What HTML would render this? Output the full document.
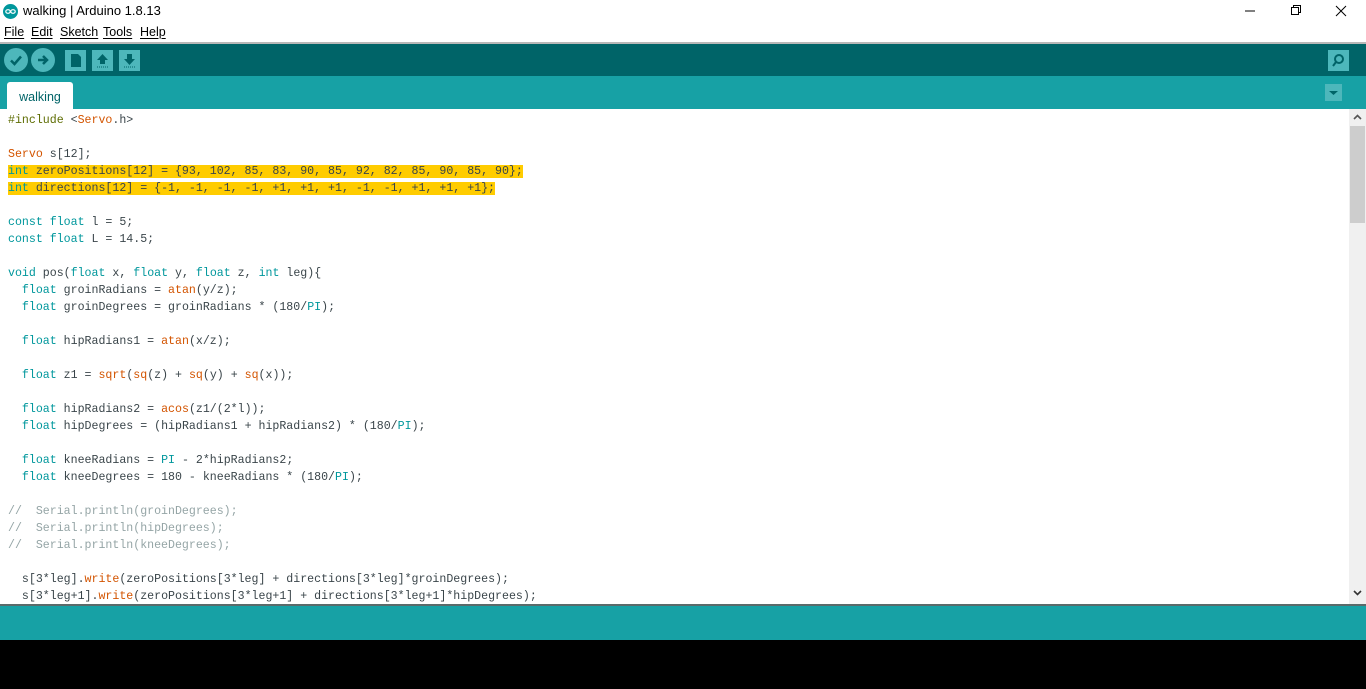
<!DOCTYPE html>
<html><head><meta charset="utf-8"><style>
*{margin:0;padding:0;box-sizing:border-box}
body{width:1366px;height:689px;overflow:hidden;background:#000;font-family:"Liberation Sans",sans-serif;position:relative}
.title{position:absolute;left:0;top:0;width:1366px;height:23px;background:#fff}
.title .t{position:absolute;left:23px;top:3px;font-size:13px;color:#000}
.menu{position:absolute;left:0;top:23px;width:1366px;height:20px;background:#fff;font-size:12.5px;color:#000}
.menu span{position:absolute;top:2px;text-decoration:underline;text-decoration-thickness:1px;text-underline-offset:2px}
.sep{position:absolute;left:0;top:42px;width:1366px;height:2px;background:#b8b8b8}
.tool{position:absolute;left:0;top:44px;width:1366px;height:32px;background:#006468}
.tabs{position:absolute;left:0;top:76px;width:1366px;height:33px;background:#17a1a5}
.tab{position:absolute;left:7px;top:6px;width:66px;height:27px;background:#fff;border-radius:3px 3px 0 0;color:#006468;font-size:12.5px;text-align:center;line-height:31px}
.ed{position:absolute;left:0;top:109px;width:1349px;height:495px;background:#fff;overflow:hidden}
pre{position:absolute;left:8px;top:3px;font-family:"Liberation Mono",monospace;font-size:11.6px;line-height:17px;color:#3a454a}
.k{color:#00979c}.f{color:#d35400}.c{color:#95a5a6}
.hl{background:#ffcc00}
.sb{position:absolute;left:1349px;top:109px;width:17px;height:495px;background:#f0f0f0}
.th{position:absolute;left:1px;top:17px;width:15px;height:97px;background:#cdcdcd}
.bot{position:absolute;left:0;top:604px;width:1366px;height:36px;background:#17a1a5;border-top:2px solid #5a6a6a}
</style></head><body>
<div class="title">
<svg style="position:absolute;left:3px;top:4px" width="15" height="15"><circle cx="7.5" cy="7.5" r="7.5" fill="#00979c"/><ellipse cx="5" cy="7.5" rx="2.2" ry="1.8" fill="none" stroke="#fff" stroke-width="1.2"/><ellipse cx="10" cy="7.5" rx="2.2" ry="1.8" fill="none" stroke="#fff" stroke-width="1.2"/></svg>
<span class="t">walking | Arduino 1.8.13</span>
<svg style="position:absolute;left:1245px;top:5px" width="110" height="12"><line x1="0" y1="6" x2="10" y2="6" stroke="#000"/><rect x="46.5" y="2.5" width="7" height="7" fill="none" stroke="#000"/><path d="M48.5 2.5V0.5H55.5V7.5H53.5" fill="none" stroke="#000"/><path d="M91 1L101 11M101 1L91 11" stroke="#000"/></svg>
</div>
<div class="menu"><span style="left:4px">File</span><span style="left:31px">Edit</span><span style="left:60px">Sketch</span><span style="left:103px">Tools</span><span style="left:140px">Help</span></div>
<div class="sep"></div>
<div class="tool">
<svg style="position:absolute;left:4px;top:4px" width="140" height="24">
<circle cx="12" cy="12" r="12" fill="#4db7bb"/><path d="M7 12.5L10.5 16L17 8.5" stroke="#006468" stroke-width="2.5" fill="none"/>
<circle cx="39" cy="12" r="12" fill="#4db7bb"/><path d="M34 12H42M39 8L43 12L39 16" stroke="#006468" stroke-width="2.5" fill="none"/>
<rect x="61" y="2" width="21" height="21" fill="#4db7bb"/><path d="M67 6H74L77 9V19H67Z" fill="#006468"/>
<rect x="88" y="2" width="21" height="21" fill="#4db7bb"/><path d="M98.5 6L104 12H101V16H96V12H93Z" fill="#006468"/><path d="M93 19H104" stroke="#006468" stroke-dasharray="1 1"/>
<rect x="115" y="2" width="21" height="21" fill="#4db7bb"/><path d="M125.5 17L131 11H128V6H123V11H120Z" fill="#006468"/><path d="M120 19H131" stroke="#006468" stroke-dasharray="1 1"/>
</svg>
<svg style="position:absolute;left:1328px;top:6px" width="21" height="21"><rect width="21" height="21" fill="#4db7bb"/><circle cx="11" cy="9" r="4" fill="none" stroke="#006468" stroke-width="2"/><path d="M8 12L5 16" stroke="#006468" stroke-width="2"/></svg>
</div>
<div class="tabs"><div class="tab">walking</div>
<svg style="position:absolute;left:1325px;top:8px" width="17" height="17"><rect width="17" height="17" fill="#4db7bb"/><path d="M4 7H13L8.5 11Z" fill="#006468"/></svg></div>
<div class="ed"><pre><span style="color:#5e6d03">#include</span> &lt;<span class="f">Servo</span>.h&gt;

<span class="f">Servo</span> s[12];
<span class="hl"><span class="k">int</span> zeroPositions[12] = {93, 102, 85, 83, 90, 85, 92, 82, 85, 90, 85, 90};</span>
<span class="hl"><span class="k">int</span> directions[12] = {-1, -1, -1, -1, +1, +1, +1, -1, -1, +1, +1, +1};</span>

<span class="k">const</span> <span class="k">float</span> l = 5;
<span class="k">const</span> <span class="k">float</span> L = 14.5;

<span class="k">void</span> pos(<span class="k">float</span> x, <span class="k">float</span> y, <span class="k">float</span> z, <span class="k">int</span> leg){
  <span class="k">float</span> groinRadians = <span class="f">atan</span>(y/z);
  <span class="k">float</span> groinDegrees = groinRadians * (180/<span class="k">PI</span>);

  <span class="k">float</span> hipRadians1 = <span class="f">atan</span>(x/z);

  <span class="k">float</span> z1 = <span class="f">sqrt</span>(<span class="f">sq</span>(z) + <span class="f">sq</span>(y) + <span class="f">sq</span>(x));

  <span class="k">float</span> hipRadians2 = <span class="f">acos</span>(z1/(2*l));
  <span class="k">float</span> hipDegrees = (hipRadians1 + hipRadians2) * (180/<span class="k">PI</span>);

  <span class="k">float</span> kneeRadians = <span class="k">PI</span> - 2*hipRadians2;
  <span class="k">float</span> kneeDegrees = 180 - kneeRadians * (180/<span class="k">PI</span>);

<span class="c">//  Serial.println(groinDegrees);</span>
<span class="c">//  Serial.println(hipDegrees);</span>
<span class="c">//  Serial.println(kneeDegrees);</span>

  s[3*leg].<span class="f">write</span>(zeroPositions[3*leg] + directions[3*leg]*groinDegrees);
  s[3*leg+1].<span class="f">write</span>(zeroPositions[3*leg+1] + directions[3*leg+1]*hipDegrees);
</pre></div>
<div class="sb"><svg style="position:absolute;left:4px;top:5px" width="9" height="6"><path d="M1 5L4.5 1.5L8 5" stroke="#555" stroke-width="1.6" fill="none"/></svg><div class="th"></div>
<svg style="position:absolute;left:4px;top:481px" width="9" height="6"><path d="M1 1L4.5 4.5L8 1" stroke="#333" stroke-width="1.6" fill="none"/></svg></div>
<div class="bot"></div>
</body></html>
